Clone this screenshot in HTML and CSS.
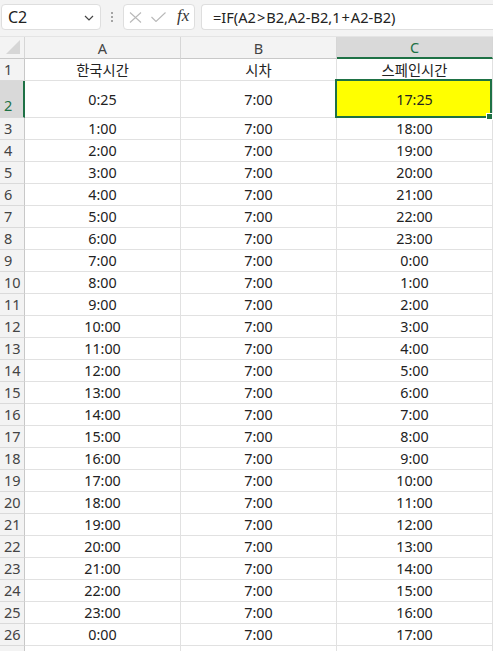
FILE: index.html
```html
<!DOCTYPE html>
<html lang="ko">
<head>
<meta charset="utf-8">
<title>Sheet</title>
<link rel="stylesheet" href="styles.css">
</head>
<body>
<div class="app">
  <div class="fbar">
    <div class="namebox">
      <span class="ref">C2</span>
      <svg class="chev" width="10" height="6" viewBox="0 0 10 6"><path d="M1 1 L5 5 L9 1" fill="none" stroke="#444" stroke-width="1.2"/></svg>
    </div>
    <div class="dots"><span></span><span></span><span></span></div>
    <div class="fxbox">
      <svg width="13" height="11" viewBox="0 0 13 11"><path d="M1 0.5 L12 10.5 M12 0.5 L1 10.5" stroke="#b8b8b8" stroke-width="1.1" fill="none"/></svg>
      <svg width="15" height="10" viewBox="0 0 15 10"><path d="M0.5 5 L5 9.5 L14.5 0.5" stroke="#b8b8b8" stroke-width="1.1" fill="none"/></svg>
      <span class="fx">fx</span>
    </div>
    <div class="formula">=IF(A2<span class="op">&gt;</span>B2,A2-B2,1<span class="op">+</span>A2-B2)</div>
  </div>
  <div class="sheet">
    <div class="row hdr">
      <div class="corner"><svg width="15" height="15" viewBox="0 0 15 15"><path d="M14 0 L14 14 L0 14 Z" fill="#d6d6d6"/></svg></div>
      <div class="ch">A</div>
      <div class="ch">B</div>
      <div class="ch sel">C</div>
    </div>
    <div class="row r1"><div class="rh">1</div><div class="c">한국시간</div><div class="c">시차</div><div class="c">스페인시간</div></div>
    <div class="row r2"><div class="rh sel">2</div><div class="c">0:25</div><div class="c">7:00</div><div class="c active">17:25</div></div>
    <div class="row"><div class="rh">3</div><div class="c">1:00</div><div class="c">7:00</div><div class="c">18:00</div></div>
    <div class="row"><div class="rh">4</div><div class="c">2:00</div><div class="c">7:00</div><div class="c">19:00</div></div>
    <div class="row"><div class="rh">5</div><div class="c">3:00</div><div class="c">7:00</div><div class="c">20:00</div></div>
    <div class="row"><div class="rh">6</div><div class="c">4:00</div><div class="c">7:00</div><div class="c">21:00</div></div>
    <div class="row"><div class="rh">7</div><div class="c">5:00</div><div class="c">7:00</div><div class="c">22:00</div></div>
    <div class="row"><div class="rh">8</div><div class="c">6:00</div><div class="c">7:00</div><div class="c">23:00</div></div>
    <div class="row"><div class="rh">9</div><div class="c">7:00</div><div class="c">7:00</div><div class="c">0:00</div></div>
    <div class="row"><div class="rh">10</div><div class="c">8:00</div><div class="c">7:00</div><div class="c">1:00</div></div>
    <div class="row"><div class="rh">11</div><div class="c">9:00</div><div class="c">7:00</div><div class="c">2:00</div></div>
    <div class="row"><div class="rh">12</div><div class="c">10:00</div><div class="c">7:00</div><div class="c">3:00</div></div>
    <div class="row"><div class="rh">13</div><div class="c">11:00</div><div class="c">7:00</div><div class="c">4:00</div></div>
    <div class="row"><div class="rh">14</div><div class="c">12:00</div><div class="c">7:00</div><div class="c">5:00</div></div>
    <div class="row"><div class="rh">15</div><div class="c">13:00</div><div class="c">7:00</div><div class="c">6:00</div></div>
    <div class="row"><div class="rh">16</div><div class="c">14:00</div><div class="c">7:00</div><div class="c">7:00</div></div>
    <div class="row"><div class="rh">17</div><div class="c">15:00</div><div class="c">7:00</div><div class="c">8:00</div></div>
    <div class="row"><div class="rh">18</div><div class="c">16:00</div><div class="c">7:00</div><div class="c">9:00</div></div>
    <div class="row"><div class="rh">19</div><div class="c">17:00</div><div class="c">7:00</div><div class="c">10:00</div></div>
    <div class="row"><div class="rh">20</div><div class="c">18:00</div><div class="c">7:00</div><div class="c">11:00</div></div>
    <div class="row"><div class="rh">21</div><div class="c">19:00</div><div class="c">7:00</div><div class="c">12:00</div></div>
    <div class="row"><div class="rh">22</div><div class="c">20:00</div><div class="c">7:00</div><div class="c">13:00</div></div>
    <div class="row"><div class="rh">23</div><div class="c">21:00</div><div class="c">7:00</div><div class="c">14:00</div></div>
    <div class="row"><div class="rh">24</div><div class="c">22:00</div><div class="c">7:00</div><div class="c">15:00</div></div>
    <div class="row"><div class="rh">25</div><div class="c">23:00</div><div class="c">7:00</div><div class="c">16:00</div></div>
    <div class="row"><div class="rh">26</div><div class="c">0:00</div><div class="c">7:00</div><div class="c">17:00</div></div>
    <div class="row"><div class="rh"></div><div class="c"></div><div class="c"></div><div class="c"></div></div>
  </div>
</div>
</body>
</html>
```

FILE: styles.css
```css
* { box-sizing: border-box; }
html, body {
  margin: 0;
  padding: 0;
  width: 493px;
  height: 651px;
  overflow: hidden;
  background: #ffffff;
  font-family: "Noto Sans", "Noto Sans CJK KR", sans-serif;
  color: #222;
}
.app { width: 493px; }

.fbar {
  height: 37px;
  background: #f3f3f3;
  display: flex;
  align-items: flex-start;
  padding-top: 4px;
  padding-left: 1px;
  border-bottom: 1px solid #e4e4e4;
}
.namebox {
  width: 100px;
  height: 26px;
  background: #fff;
  border: 1px solid #dedede;
  border-radius: 4px;
  display: flex;
  align-items: center;
  justify-content: space-between;
  padding: 0 6px 0 6px;
}
.ref { font-size: 16px; color: #222; }
.chev { margin-top: 1px; }
.dots {
  width: 22px;
  height: 26px;
  display: flex;
  flex-direction: column;
  align-items: center;
  justify-content: center;
  gap: 2px;
}
.dots span {
  width: 2px;
  height: 2px;
  background: #8a8a8a;
  border-radius: 1px;
}
.fxbox {
  width: 72px;
  height: 26px;
  background: #fff;
  border: 1px solid #dedede;
  border-radius: 4px;
  display: flex;
  align-items: center;
  padding-left: 5px;
  gap: 9px;
}
.fx {
  font-family: "Liberation Serif", "DejaVu Serif", serif;
  font-style: italic;
  font-size: 17px;
  color: #333;
  margin-left: 2px;
  margin-top: -2px;
}
.formula {
  flex: 1;
  margin-left: 6px;
  height: 26px;
  background: #fff;
  border: 1px solid #dedede;
  border-right: none;
  border-radius: 4px 0 0 4px;
  display: flex;
  align-items: center;
  padding-left: 11px;
  font-size: 14.6px;
  color: #222;
  white-space: nowrap;
}
.op { padding: 0 1px; }

.sheet { width: 493px; }
.row {
  display: grid;
  grid-template-columns: 25px 156px 156px 156px;
  height: 22px;
}
.row.hdr { height: 22px; }
.row.r1 { height: 22px; }
.row.r2 { height: 37px; }

.corner {
  background: #f3f3f3;
  border-right: 1px solid #d6d6d6;
  border-bottom: 1px solid #c8c8c8;
  display: flex;
  align-items: flex-end;
  justify-content: flex-end;
  padding: 0 3px 3px 0;
}
.ch {
  background: #f3f3f3;
  border-right: 1px solid #d6d6d6;
  border-bottom: 1px solid #c8c8c8;
  display: flex;
  align-items: center;
  justify-content: center;
  font-size: 14.5px;
  color: #444;
}
.ch.sel {
  background: #d9d9d9;
  border-bottom: 2px solid #1e7145;
  color: #1e7145;
}
.rh {
  background: #f3f3f3;
  border-right: 1px solid #c8c8c8;
  border-bottom: 1px solid #dadada;
  display: flex;
  align-items: flex-end;
  padding: 0 0 1px 4px;
  font-size: 14.5px;
  color: #444;
}
.rh.sel {
  background: #d9d9d9;
  border-right: 2px solid #1e7145;
  color: #1e7145;
  padding-bottom: 2px;
}
.c {
  border-right: 1px solid #e1e1e1;
  border-bottom: 1px solid #e1e1e1;
  display: flex;
  align-items: center;
  justify-content: center;
  font-size: 14.3px;
  color: #222;
  white-space: nowrap;
}
.c.active {
  background: #ffff00;
  position: relative;
}
.c.active::after {
  content: "";
  position: absolute;
  left: -2px;
  top: -2px;
  right: 0;
  bottom: -1px;
  border: 2px solid #1e7145;
}
.c.active::before {
  content: "";
  position: absolute;
  right: -1px;
  bottom: -3px;
  width: 5px;
  height: 5px;
  background: #1e7145;
  border: 1px solid #fff;
  z-index: 2;
}
```
